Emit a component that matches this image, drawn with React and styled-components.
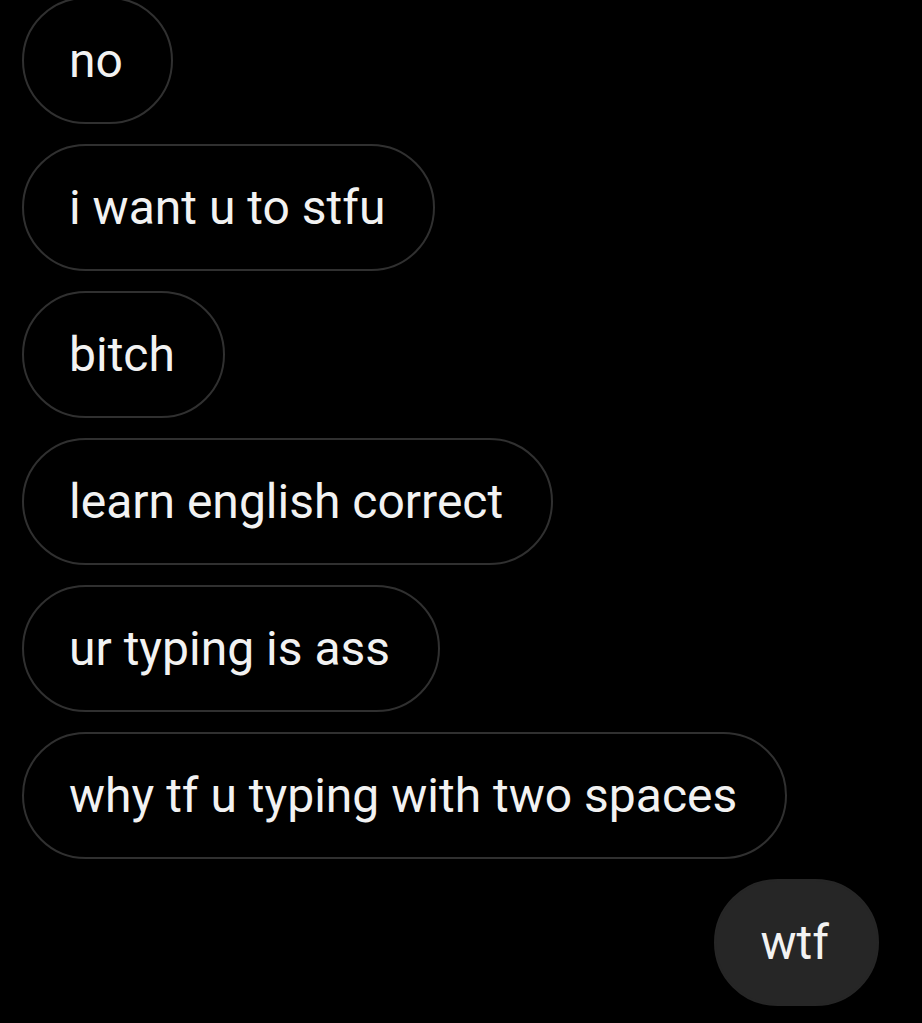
import styled, { createGlobalStyle } from "styled-components";

const GlobalStyle = createGlobalStyle`
    html, body {
        margin: 0;
        padding: 0;
        background: #000;
    }
    body {
        font-family: Roboto, "Noto Sans", "Liberation Sans", sans-serif;
        overflow: hidden;
    }
`

const messages = [
    { text: "no", mine: false },
    { text: "i want u to stfu", mine: false },
    { text: "bitch", mine: false },
    { text: "learn english correct", mine: false },
    { text: "ur typing is ass", mine: false },
    { text: "why tf u typing with two spaces", mine: false },
    { text: "wtf", mine: true },
];

const App = () => {
    return (
        <>
            <GlobalStyle />
            <Thread>
                {messages.map((m, i) => (
                    <Row key={i} $mine={m.mine}>
                        <Bubble $mine={m.mine}>{m.text}</Bubble>
                    </Row>
                ))}
            </Thread>
        </>
    );
};
export default App;

const Thread = styled.div`
    width: 922px;
    height: 1023px;
    box-sizing: border-box;
    padding: 0 43px 0 22px;
    margin-top: -3px;
    display: flex;
    flex-direction: column;
    gap: 20px;
    background: #000;
`

const Row = styled.div`
    display: flex;
    justify-content: ${(p) => (p.$mine ? "flex-end" : "flex-start")};
`

const Bubble = styled.div`
    box-sizing: border-box;
    height: 127px;
    display: flex;
    align-items: center;
    padding: 0 48px 0 45px;
    border-radius: 64px;
    border: 2px solid ${(p) => (p.$mine ? "#262626" : "#303030")};
    background: ${(p) => (p.$mine ? "#262626" : "transparent")};
    color: #f2f2f2;
    font-size: 48px;
    white-space: nowrap;
`
